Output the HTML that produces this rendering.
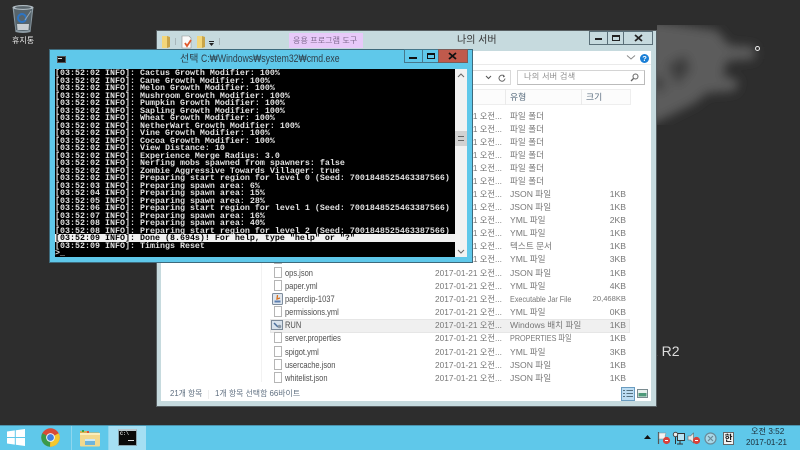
<!DOCTYPE html>
<html lang="ko"><head><meta charset="utf-8"><title>Desktop</title>
<style>
html,body{margin:0;padding:0}
body{width:800px;height:450px;overflow:hidden;position:relative;background:#2d2d2d;font-family:"Liberation Sans","Noto Sans CJK KR",sans-serif}
div,span,svg{position:absolute;display:block}
.t{white-space:nowrap;line-height:12px}
.r{left:0;top:0;width:800px;height:0}
.r .n{left:285px;color:#4f4f4f;font-size:9.4px;white-space:nowrap;line-height:12px;margin-top:-6px;transform:scaleX(.8);transform-origin:0 0}
.r .d{left:435px;color:#777;font-size:8.3px;white-space:nowrap;line-height:12px;margin-top:-6px}
.r .y{left:510px;color:#777;font-size:8.6px;white-space:nowrap;line-height:12px;margin-top:-6px}
.r .y.c{transform:scaleX(.84);transform-origin:0 0}
.r .s{right:174px;color:#777;font-size:8.6px;white-space:nowrap;line-height:12px;margin-top:-6px}
.r .f{left:274px;margin-top:-6px;width:8px;height:11px;background:#fff;border:1px solid #b5b5b5;box-sizing:border-box}
#con{left:55px;top:69px;width:400px;height:188px;background:#000;overflow:hidden;color:#e2e2e2;font:bold 8.33px/9px "Liberation Mono",monospace}
#con p{margin:0;height:7.5px;white-space:pre}
#con p.h{background:#f0f0f0;color:#000}
.btn{border:1px solid #46788c;box-sizing:border-box;top:49px;height:14px}
.ebtn{border:1px solid #5a6f78;box-sizing:border-box;top:31px;height:14px}
</style></head><body>

<!-- recycle bin -->
<svg style="left:11px;top:4px" width="24" height="30" viewBox="0 0 24 30">
<path d="M1.500 3 L22.500 3 L19.500 28 Q12 30 4.500 28 Z" fill="#8b9aa3"/>
<path d="M3 5 L21 5 L19 26 Q12 28 5 26 Z" fill="#56646c"/>
<path d="M6 20 L18 20 L17.500 26 L6.500 26 Z" fill="#c8ced2"/>
<ellipse cx="12" cy="3.500" rx="10.500" ry="2.500" fill="#aeb9c0"/>
<ellipse cx="12" cy="3.500" rx="8" ry="1.400" fill="#59656c"/>
<circle cx="11" cy="14" r="4" fill="none" stroke="#2c74c4" stroke-width="2"/>
<path d="M14 16 L20 7" stroke="#9aa6ad" stroke-width="1"/>
</svg>
<div class="t" style="left:12px;top:35px;color:#e8e8e8;font-size:8px">휴지통</div>

<!-- wallpaper text -->
<div style="left:657px;top:343px;width:24px;height:17px;overflow:hidden"><span style="left:-7px;top:0;color:#ddd;font-size:14px;line-height:16px;white-space:nowrap">2 R2</span></div>

<!-- redaction blur -->
<svg style="left:657px;top:25px" width="110" height="100" viewBox="0 0 110 100">
<defs><filter id="b" x="-20%" y="-20%" width="140%" height="140%"><feGaussianBlur stdDeviation="5"/></filter></defs>
<g filter="url(#b)">
<path d="M-8 -5 L60 5 L72 20 L98 22 L98 34 L70 36 L66 50 L82 56 L78 66 L50 68 L38 78 L10 92 L-8 100 Z" fill="#5c5c5c"/>
<path d="M10 40 L28 30 L34 44 L20 60 Z" fill="#3e3e3e"/>
<path d="M-4 50 L8 52 L8 66 L-4 66 Z" fill="#444"/>
</g></svg>
<div style="left:755px;top:46px;width:5px;height:5px;border:1px solid #eee;border-radius:50%;box-sizing:border-box"></div>

<!-- explorer window -->
<div style="left:156px;top:30px;width:501px;height:377px;background:#c6dade;border:1px solid #585f62;box-sizing:border-box"></div>
<div style="left:161px;top:51px;width:490px;height:350px;background:#fff"></div>
<div style="left:161px;top:64px;width:490px;height:1px;background:#eaeaea"></div>

<!-- quick access -->
<svg style="left:161px;top:34px" width="60" height="15" viewBox="0 0 60 15">
<path d="M1 2 H6 L9 3 V13 L5 14 H1 Z" fill="#f3d67a"/><path d="M6 2 L9 3 V13 L6 14 Z" fill="#c9a54a"/>
<rect x="14" y="4" width="1" height="7" fill="#a8b6ba"/>
<path d="M21 2 H28 L30 4 V14 H21 Z" fill="#fafafa" stroke="#8f8f8f" stroke-width=".6"/><path d="M24 9 L26 12 L30 6" stroke="#e0582a" stroke-width="1.800" fill="none"/>
<path d="M36 2 H41 L44 3 V13 L40 14 H36 Z" fill="#f3d67a"/><path d="M41 2 L44 3 V13 L41 14 Z" fill="#c9a54a"/>
<rect x="48" y="7" width="5" height="1" fill="#222"/><path d="M48 9 H53 L50.500 12 Z" fill="#222"/>
<rect x="58" y="4" width="1" height="7" fill="#a8b6ba"/>
</svg>

<!-- tool tab & title -->
<div style="left:289px;top:33px;width:74px;height:15px;background:#e8c9f9"></div>
<div class="t" style="left:293px;top:35px;color:#806a90;font-size:8px;letter-spacing:.1px">응용 프로그램 도구</div>
<div class="t" style="left:457px;top:35px;color:#333;font-size:10px">나의 서버</div>

<!-- explorer buttons -->
<div class="ebtn" style="left:589px;width:19px"></div>
<div class="ebtn" style="left:607px;width:17px"></div>
<div class="ebtn" style="left:623px;width:30px"></div>
<div style="left:595px;top:38px;width:7px;height:2px;background:#222"></div>
<div style="left:612px;top:35px;width:8px;height:6px;border:1px solid #222;border-top-width:2px;box-sizing:border-box"></div>
<svg style="left:634px;top:34px" width="9" height="8"><path d="M1 1 L8 7 M8 1 L1 7" stroke="#222" stroke-width="1.800"/></svg>

<!-- help / ribbon chevron -->
<svg style="left:626px;top:54px" width="10" height="7"><path d="M1 1.500 L5 5 L9 1.500" fill="none" stroke="#8a8a8a" stroke-width="1"/></svg>
<div style="left:640px;top:54px;width:9px;height:9px;border-radius:50%;background:#1b7fd6;color:#fff;font:bold 7.5px/9px 'Liberation Sans',sans-serif;text-align:center">?</div>

<!-- address / search -->
<div style="left:470px;top:70px;width:41px;height:15px;border:1px solid #d9d9d9;box-sizing:border-box;background:#fff"></div>
<svg style="left:485px;top:75px" width="7" height="5"><path d="M1 1 L3.500 3.500 L6 1" fill="none" stroke="#555" stroke-width="1"/></svg>
<svg style="left:498px;top:74px" width="8" height="8"><path d="M6.500 2.500 A3 3 0 1 0 7 4.500" fill="none" stroke="#666" stroke-width="1"/><path d="M5 .5 L7 2.500 L5 3.500 Z" fill="#666"/></svg>
<div style="left:517px;top:70px;width:128px;height:15px;border:1px solid #d4d4d4;border-right-color:#bbb;border-bottom-color:#bbb;box-sizing:border-box;background:#fff"></div>
<div class="t" style="left:524px;top:71px;color:#8e8e8e;font-size:8.2px;letter-spacing:.2px">나의 서버 검색</div>
<svg style="left:630px;top:73px" width="9" height="9"><circle cx="5.500" cy="3.500" r="2.500" fill="none" stroke="#666" stroke-width="1"/><path d="M3.500 5.500 L1 8" stroke="#666" stroke-width="1.300"/></svg>

<!-- column headers -->
<div style="left:263px;top:89px;width:368px;height:16px;background:#fcfcfc;border:1px solid #eee;box-sizing:border-box"></div>
<div style="left:505px;top:89px;width:1px;height:16px;background:#eaeaea"></div>
<div style="left:581px;top:89px;width:1px;height:16px;background:#eaeaea"></div>
<div class="t" style="left:510px;top:91px;color:#5c6f80;font-size:8.8px">유형</div>
<div class="t" style="left:586px;top:91px;color:#5c6f80;font-size:8.8px">크기</div>
<div style="left:261px;top:105px;width:1px;height:277px;background:#f2f2f2"></div>

<!-- selected row -->
<div style="left:270px;top:319px;width:360px;height:14px;background:#f0f0f0;border:1px solid #e6e6e6;box-sizing:border-box"></div>

<!-- file rows -->
<div class="r" style="top:116px"><span class="d">2017-01-21 오전...</span><span class="y">파일 폴더</span></div>
<div class="r" style="top:129px"><span class="d">2017-01-21 오전...</span><span class="y">파일 폴더</span></div>
<div class="r" style="top:142px"><span class="d">2017-01-21 오전...</span><span class="y">파일 폴더</span></div>
<div class="r" style="top:155px"><span class="d">2017-01-21 오전...</span><span class="y">파일 폴더</span></div>
<div class="r" style="top:168px"><span class="d">2017-01-21 오전...</span><span class="y">파일 폴더</span></div>
<div class="r" style="top:181px"><span class="d">2017-01-21 오전...</span><span class="y">파일 폴더</span></div>
<div class="r" style="top:194px"><span class="d">2017-01-21 오전...</span><span class="y">JSON 파일</span><span class="s">1KB</span></div>
<div class="r" style="top:207px"><span class="d">2017-01-21 오전...</span><span class="y">JSON 파일</span><span class="s">1KB</span></div>
<div class="r" style="top:220px"><span class="d">2017-01-21 오전...</span><span class="y">YML 파일</span><span class="s">2KB</span></div>
<div class="r" style="top:233px"><span class="d">2017-01-21 오전...</span><span class="y">YML 파일</span><span class="s">1KB</span></div>
<div class="r" style="top:246px"><span class="d">2017-01-21 오전...</span><span class="y">텍스트 문서</span><span class="s">1KB</span></div>
<div class="r" style="top:259px"><span class="f"></span><span class="d">2017-01-21 오전...</span><span class="y">YML 파일</span><span class="s">3KB</span></div>
<div class="r" style="top:273px"><span class="f"></span><span class="n">ops.json</span><span class="d">2017-01-21 오전...</span><span class="y">JSON 파일</span><span class="s">1KB</span></div>
<div class="r" style="top:286px"><span class="f"></span><span class="n">paper.yml</span><span class="d">2017-01-21 오전...</span><span class="y">YML 파일</span><span class="s">4KB</span></div>
<div class="r" style="top:299px"><span class="n">paperclip-1037</span><span class="d">2017-01-21 오전...</span><span class="y c">Executable Jar File</span><span class="s" style="font-size:7.6px">20,468KB</span></div>
<div class="r" style="top:312px"><span class="f"></span><span class="n">permissions.yml</span><span class="d">2017-01-21 오전...</span><span class="y">YML 파일</span><span class="s">0KB</span></div>
<div class="r" style="top:325px"><span class="n">RUN</span><span class="d">2017-01-21 오전...</span><span class="y">Windows 배치 파일</span><span class="s">1KB</span></div>
<div class="r" style="top:338px"><span class="f"></span><span class="n">server.properties</span><span class="d">2017-01-21 오전...</span><span class="y c">PROPERTIES 파일</span><span class="s">1KB</span></div>
<div class="r" style="top:352px"><span class="f"></span><span class="n">spigot.yml</span><span class="d">2017-01-21 오전...</span><span class="y">YML 파일</span><span class="s">3KB</span></div>
<div class="r" style="top:365px"><span class="f"></span><span class="n">usercache.json</span><span class="d">2017-01-21 오전...</span><span class="y">JSON 파일</span><span class="s">1KB</span></div>
<div class="r" style="top:378px"><span class="f"></span><span class="n">whitelist.json</span><span class="d">2017-01-21 오전...</span><span class="y">JSON 파일</span><span class="s">1KB</span></div>

<!-- jar + bat icons -->
<svg style="left:272px;top:293px" width="11" height="12"><rect x=".5" y=".5" width="10" height="11" rx="1" fill="#dfe6ee" stroke="#7d8c9c"/><path d="M5.500 2 L5 6 L8 5" stroke="#d8701e" stroke-width="1.300" fill="none"/><rect x="2.500" y="7.500" width="6" height="2" fill="#5c7fb0"/></svg>
<svg style="left:271px;top:319px" width="12" height="12"><rect x=".5" y="1.500" width="11" height="9" fill="#d8e2ec" stroke="#7b8a9a"/><path d="M3 4 L7 8" stroke="#4a6f9c" stroke-width="1.500"/><circle cx="8.500" cy="7.500" r="1.800" fill="#8a97a5"/></svg>

<!-- status bar -->
<div class="t" style="left:170px;top:388px;color:#5f6f80;font-size:7.8px">21개 항목</div>
<div style="left:208px;top:390px;width:1px;height:9px;background:#eee"></div>
<div class="t" style="left:215px;top:388px;color:#5f6f80;font-size:7.9px">1개 항목 선택함 66바이트</div>
<div style="left:621px;top:387px;width:14px;height:14px;background:#bcdcf2;border:1px solid #6a9cc0;box-sizing:border-box"></div>
<svg style="left:623px;top:389px" width="10" height="10"><path d="M0 1.500 H2 M3.500 1.500 H10 M0 4.500 H2 M3.500 4.500 H10 M0 7.500 H2 M3.500 7.500 H10" stroke="#55707f" stroke-width="1"/></svg>
<svg style="left:637px;top:389px" width="11" height="10"><rect x=".5" y=".5" width="10" height="8" fill="#e9f1ee" stroke="#7a8b90"/><rect x="1.500" y="4" width="8" height="3.500" fill="#4e9a7a"/></svg>

<!-- cmd window -->
<div style="left:49px;top:49px;width:424px;height:214px;background:#5fc8ea;border:1px solid #3e6a7c;box-sizing:border-box"></div>
<div style="left:57px;top:56px;width:9px;height:7px;background:#111;border:1px solid #555;box-sizing:border-box"></div>
<div style="left:58px;top:58px;width:4px;height:1px;background:#ddd"></div>
<div class="t" style="left:180px;top:53px;color:#2f3f4a;font-size:10px;line-height:13px">선택</div>
<div class="t" style="left:201px;top:53px;color:#2f3f4a;font-size:10.6px;line-height:13px;transform:scaleX(.82);transform-origin:0 0">C:₩Windows₩system32₩cmd.exe</div>
<div class="btn" style="left:404px;width:19px"></div>
<div class="btn" style="left:422px;width:17px"></div>
<div class="btn" style="left:438px;width:30px;background:#c05a4c;border-color:#7c5c58"></div>
<div style="left:409px;top:57px;width:8px;height:2px;background:#111"></div>
<div style="left:427px;top:53px;width:8px;height:6px;border:1px solid #111;border-top-width:2px;box-sizing:border-box"></div>
<svg style="left:448px;top:52px" width="9" height="8"><path d="M1 1 L8 7 M8 1 L1 7" stroke="#111" stroke-width="1.800"/></svg>

<div id="con">
<p>[03:52:02 INFO]: Cactus Growth Modifier: 100%</p>
<p>[03:52:02 INFO]: Cane Growth Modifier: 100%</p>
<p>[03:52:02 INFO]: Melon Growth Modifier: 100%</p>
<p>[03:52:02 INFO]: Mushroom Growth Modifier: 100%</p>
<p>[03:52:02 INFO]: Pumpkin Growth Modifier: 100%</p>
<p>[03:52:02 INFO]: Sapling Growth Modifier: 100%</p>
<p>[03:52:02 INFO]: Wheat Growth Modifier: 100%</p>
<p>[03:52:02 INFO]: NetherWart Growth Modifier: 100%</p>
<p>[03:52:02 INFO]: Vine Growth Modifier: 100%</p>
<p>[03:52:02 INFO]: Cocoa Growth Modifier: 100%</p>
<p>[03:52:02 INFO]: View Distance: 10</p>
<p>[03:52:02 INFO]: Experience Merge Radius: 3.0</p>
<p>[03:52:02 INFO]: Nerfing mobs spawned from spawners: false</p>
<p>[03:52:02 INFO]: Zombie Aggressive Towards Villager: true</p>
<p>[03:52:02 INFO]: Preparing start region for level 0 (Seed: 7001848525463387566)</p>
<p>[03:52:03 INFO]: Preparing spawn area: 6%</p>
<p>[03:52:04 INFO]: Preparing spawn area: 15%</p>
<p>[03:52:05 INFO]: Preparing spawn area: 28%</p>
<p>[03:52:06 INFO]: Preparing start region for level 1 (Seed: 7001848525463387566)</p>
<p>[03:52:07 INFO]: Preparing spawn area: 16%</p>
<p>[03:52:08 INFO]: Preparing spawn area: 40%</p>
<p>[03:52:08 INFO]: Preparing start region for level 2 (Seed: 7001848525463387566)</p>
<p class="h">[03:52:09 INFO]: Done (8.694s)! For help, type "help" or "?"</p>
<p>[03:52:09 INFO]: Timings Reset</p>
<p>&gt;_</p>
</div>

<!-- console scrollbar -->
<div style="left:455px;top:69px;width:12px;height:188px;background:#f2f2f2"></div>
<svg style="left:457px;top:73px" width="8" height="5"><path d="M1 4 L4 1 L7 4" fill="none" stroke="#666" stroke-width="1"/></svg>
<svg style="left:457px;top:249px" width="8" height="5"><path d="M1 1 L4 4 L7 1" fill="none" stroke="#666" stroke-width="1"/></svg>
<div style="left:455px;top:131px;width:12px;height:15px;background:#d2d2d2"></div>
<div style="left:458px;top:136px;width:6px;height:5px;border-top:1px solid #666;border-bottom:1px solid #666;box-sizing:border-box"></div>

<!-- taskbar -->
<div style="left:0;top:425px;width:800px;height:25px;background:#5fc8ea;border-top:1px solid #4b93ad;box-sizing:border-box"></div>
<div style="left:71px;top:426px;width:1px;height:24px;background:#8fd6ee"></div>
<div style="left:108px;top:426px;width:1px;height:24px;background:#8fd6ee"></div>
<div style="left:109px;top:426px;width:37px;height:24px;background:#a5dff3"></div>
<svg style="left:7px;top:429px" width="18" height="17" viewBox="0 0 18 17"><path d="M0 2.500 L7.800 1.400 V8 H0 Z M8.800 1.200 L18 0 V8 H8.800 Z M0 9 H7.800 V15.600 L0 14.500 Z M8.800 9 H18 V17 L8.800 15.800 Z" fill="#fff"/></svg>
<svg style="left:41px;top:428px" width="19" height="19" viewBox="0 0 19 19">
<circle cx="9.500" cy="9.500" r="9.200" fill="#d84a38"/>
<path d="M9.500 9.500 L1.300 5.300 A9.200 9.200 0 0 0 9 18.700 Z" fill="#3a9a48"/>
<path d="M9.500 9.500 L9 18.700 A9.200 9.200 0 0 0 17.700 5.300 Z" fill="#f3c82e"/>
<circle cx="9.500" cy="9.500" r="4.400" fill="#eef3fb"/><circle cx="9.500" cy="9.500" r="3.400" fill="#3f7fe0"/></svg>
<svg style="left:80px;top:429px" width="20" height="18" viewBox="0 0 20 18">
<path d="M0 2 H7 L8 3.500 H19 V8 H0 Z" fill="#d9b050"/>
<rect x="0" y="4" width="20" height="13.500" rx="1" fill="#f3d98e"/>
<rect x="0" y="4" width="20" height="2" fill="#fbeebc"/>
<rect x="2" y="1" width="2" height="2" fill="#3aa54a"/><rect x="7" y="2" width="2" height="2" fill="#d8503c"/>
<path d="M5 11 H15 V16 H5 Z" fill="#6fb5dc"/><rect x="5" y="10" width="10" height="2" fill="#cfeaf6"/>
</svg>
<div style="left:118px;top:429px;width:19px;height:17px;background:#0a0a0a;border:1px solid #8aa4ae;border-top:2px solid #b9c6cc;box-sizing:border-box"></div>
<div class="t" style="left:120px;top:431px;color:#ddd;font:bold 5px/6px 'Liberation Mono',monospace">C:\</div>
<div style="left:128px;top:440px;width:6px;height:1px;background:#ddd"></div>

<!-- tray -->
<svg style="left:644px;top:435px" width="7" height="5"><path d="M0 4 H7 L3.500 0 Z" fill="#111"/></svg>
<svg style="left:657px;top:431px" width="14" height="14"><path d="M1.500 1 V13" stroke="#555" stroke-width="1.200"/><path d="M2 2 H9 L8 5 L9 8 H2 Z" fill="#f2f2f2" stroke="#888" stroke-width=".5"/><circle cx="9.500" cy="9.500" r="3.600" fill="#d8413a"/><path d="M8 9.500 H11" stroke="#fff"/></svg>
<svg style="left:672px;top:431px" width="14" height="14"><rect x="5.500" y="2.500" width="7" height="7" fill="#b8e4f4" stroke="#333"/><circle cx="3.500" cy="3.500" r="2.200" fill="#eee" stroke="#444"/><path d="M3.500 6 V13 M8 10 V13 M5 13 H11" stroke="#333"/></svg>
<svg style="left:687px;top:431px" width="14" height="14"><path d="M1 5 H3.500 L6.500 2 V12 L3.500 9 H1 Z" fill="#e6e6e6" stroke="#666" stroke-width=".6"/><circle cx="9.500" cy="9.500" r="3.600" fill="#d8413a"/><path d="M8 9.500 H11" stroke="#fff"/></svg>
<svg style="left:704px;top:432px" width="13" height="13"><circle cx="6.500" cy="6.500" r="5.500" fill="#a9d8e8" stroke="#6a8a98" stroke-width="1.200"/><path d="M4 4 L9 9 M9 4 L4 9" stroke="#6a8a98" stroke-width="1.200"/></svg>
<div style="left:723px;top:432px;width:11px;height:13px;background:#f4f4f4;border:1px solid #666;box-sizing:border-box;color:#111;font-size:8.5px;line-height:11px;text-align:center;font-weight:bold">한</div>
<div class="t" style="left:751px;top:426px;color:#1c2c36;font-size:8.2px">오전 3:52</div>
<div class="t" style="left:746px;top:437px;color:#1c2c36;font-size:8px">2017-01-21</div>
</body></html>
